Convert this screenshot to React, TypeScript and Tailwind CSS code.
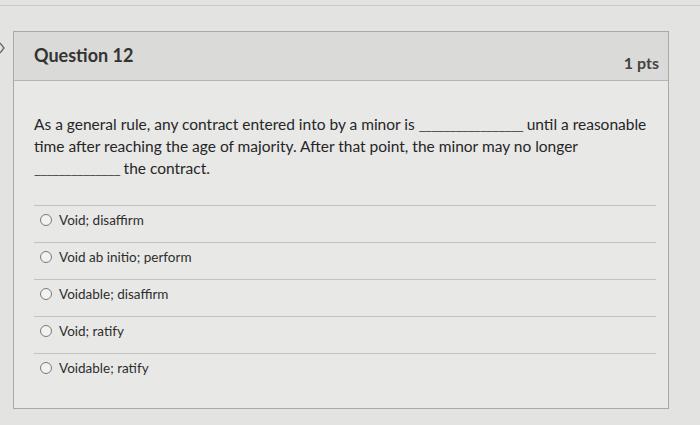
import React from 'react';

const answers = [
  'Void; disaffirm',
  'Void ab initio; perform',
  'Voidable; disaffirm',
  'Void; ratify',
  'Voidable; ratify',
];

const App: React.FC = () => {
  return (
    <div
      className="w-[700px] h-[425px] overflow-hidden bg-[#e3e3e1] text-[#2b2b2b] relative"
      style={{ fontFamily: 'Lato, "Open Sans", sans-serif' }}
    >
      {/* top edge of previous element */}
      <div className="h-[6px] border-b border-[#c9c9c7]" />

      {/* collapsed sidebar chevron */}
      <svg className="absolute left-0 top-[42px]" width="6" height="12" viewBox="0 0 6 12">
        <path d="M0 1 L4 6 L0 11" fill="none" stroke="#666" strokeWidth="1.3" />
      </svg>

      <div className="pl-[13px] pr-[31px] pt-[25px]">
        <div className="border border-[#a9a9a7] bg-[#e8e8e6] h-[378px]">
          {/* header */}
          <div className="h-[49px] bg-[#dadad8] border-b border-[#b5b5b3] flex items-center justify-between pl-[20px] pr-[9px]">
            <h2 className="text-[18px] font-bold text-[#333] mt-[-2px]">Question 12</h2>
            <span className="text-[16px] font-bold text-[#444] mt-[13px]">1 pts</span>
          </div>

          {/* body */}
          <div className="pl-[20px] pr-[12px] pt-[32px]">
            <p className="text-[15.5px] leading-[22px] text-[#262626] whitespace-nowrap">
              As a general rule, any contract entered into by a minor is{' '}
              <span className="tracking-[-1px] text-[#555]">_________________</span> until a reasonable
              <br />
              time after reaching the age of majority. After that point, the minor may no longer
              <br />
              <span className="tracking-[-1px] text-[#555]">______________</span> the contract.
            </p>

            <div className="mt-[26px]">
              {answers.map((a) => (
                <div
                  key={a}
                  className="h-[37px] border-t border-[#c2c2c0] flex items-start pt-[4px]"
                >
                  <label className="flex items-center gap-[7px] pl-[6px] text-[13.5px] leading-[20px] text-[#2e2e2e]">
                    <span className="w-[12px] h-[12px] rounded-full border border-[#7a7a7a] bg-[#f2f2f0]" />
                    {a}
                  </label>
                </div>
              ))}
            </div>
          </div>
        </div>
      </div>
    </div>
  );
};

export default App;
